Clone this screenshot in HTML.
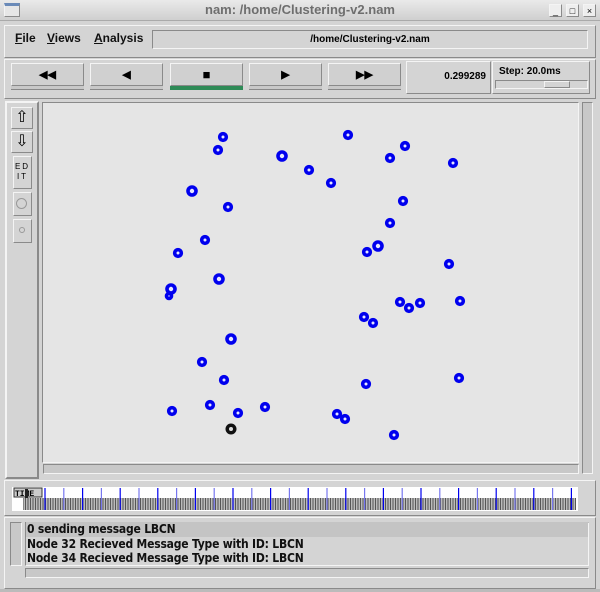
<!DOCTYPE html><html><head><style>
*{margin:0;padding:0;box-sizing:border-box}
body{width:600px;height:592px;background:#d4d4d4;position:relative;overflow:hidden;font-family:"Liberation Sans",sans-serif}
.a{position:absolute}
.rb{border:1px solid;border-color:#f4f4f4 #8a8a8a #8a8a8a #f4f4f4}
.sk{border:1px solid;border-color:#8a8a8a #f4f4f4 #f4f4f4 #8a8a8a}
.btn{background:#d0d0d0;font-size:11px;font-weight:bold;text-align:center;line-height:22px;color:#000}
.ul{height:4px;background:#c8c8c8;border-bottom:1px solid #888}
.msg{font-size:12px;font-weight:bold;color:#111;left:26px;width:562px;height:15px;line-height:15px;padding-left:1px;font-family:"DejaVu Sans Condensed","Liberation Sans",sans-serif;letter-spacing:-0.2px}
.mn{font-size:12px;color:#111;font-weight:bold;top:31px}
</style></head><body>
<div class="a" style="left:0;top:0;width:600px;height:21px;background:linear-gradient(#eaeaea,#cfcfcf);border-bottom:1px solid #aaa"></div>
<div class="a rb" style="left:4px;top:3px;width:16px;height:14px;background:#e6e6e6;border-top:3px solid #6a8ab8"></div>
<div class="a" style="left:0;top:2px;width:600px;text-align:center;font-size:13px;font-weight:bold;color:#6e6e6e">nam: /home/Clustering-v2.nam</div>
<div class="a rb" style="left:549px;top:4px;width:13px;height:13px;font-size:9px;text-align:center;line-height:12px;background:#eee">_</div>
<div class="a rb" style="left:566px;top:4px;width:13px;height:13px;font-size:9px;text-align:center;line-height:12px;background:#eee">□</div>
<div class="a rb" style="left:583px;top:4px;width:13px;height:13px;font-size:9px;text-align:center;line-height:12px;background:#eee">×</div>

<div class="a rb" style="left:4px;top:25px;width:592px;height:33px"></div>
<div class="a mn" style="left:15px"><u>F</u>ile</div>
<div class="a mn" style="left:47px"><u>V</u>iews</div>
<div class="a mn" style="left:94px"><u>A</u>nalysis</div>
<div class="a sk" style="left:152px;top:30px;width:436px;height:19px;font-size:10px;font-weight:bold;text-align:center;line-height:17px">/home/Clustering-v2.nam</div>

<div class="a rb" style="left:4px;top:59px;width:592px;height:40px"></div>
<div class="a rb btn" style="left:11px;top:63px;width:73px;height:23px">◀◀</div><div class="a ul" style="left:11px;top:86px;width:73px"></div>
<div class="a rb btn" style="left:90px;top:63px;width:73px;height:23px">◀</div><div class="a ul" style="left:90px;top:86px;width:73px"></div>
<div class="a rb btn" style="left:170px;top:63px;width:73px;height:23px;font-size:13px">■</div><div class="a" style="left:170px;top:86px;width:73px;height:4px;background:#2e8b57"></div>
<div class="a rb btn" style="left:249px;top:63px;width:73px;height:23px">▶</div><div class="a ul" style="left:249px;top:86px;width:73px"></div>
<div class="a rb btn" style="left:328px;top:63px;width:73px;height:23px">▶▶</div><div class="a ul" style="left:328px;top:86px;width:73px"></div>
<div class="a rb" style="left:406px;top:61px;width:85px;height:33px;font-size:10px;font-weight:bold;text-align:right;padding-right:4px;line-height:30px">0.299289</div>
<div class="a rb" style="left:492px;top:61px;width:98px;height:33px"></div>
<div class="a" style="left:499px;top:66px;font-size:10px;font-weight:bold">Step: 20.0ms</div>
<div class="a sk" style="left:495px;top:80px;width:93px;height:9px"></div>
<div class="a rb" style="left:544px;top:81px;width:26px;height:7px"></div>

<div class="a rb" style="left:5px;top:101px;width:34px;height:378px;border-width:2px"></div>
<div class="a rb" style="left:11px;top:107px;width:22px;height:22px;font-size:16px;text-align:center;line-height:20px">⇧</div>
<div class="a rb" style="left:11px;top:131px;width:22px;height:22px;font-size:16px;text-align:center;line-height:20px">⇩</div>
<div class="a rb" style="left:13px;top:156px;width:19px;height:33px;font-size:8px;text-align:center;line-height:10px;padding-top:5px;letter-spacing:2px">ED<br>IT</div>
<div class="a rb" style="left:13px;top:192px;width:19px;height:24px"></div>
<div class="a" style="left:16px;top:198px;width:11px;height:11px;border:1px solid #999;border-radius:50%"></div>
<div class="a rb" style="left:13px;top:219px;width:19px;height:24px"></div>
<div class="a" style="left:19px;top:227px;width:6px;height:6px;border:1px solid #999;border-radius:50%"></div>

<div class="a sk" style="left:42px;top:102px;width:537px;height:361px;background:#e5e5e5"></div>
<div class="a sk" style="left:582px;top:102px;width:11px;height:372px;background:#c8c8c8"></div>
<div class="a sk" style="left:43px;top:464px;width:536px;height:10px;background:#c8c8c8"></div>

<svg class="a" style="left:0;top:0" width="600" height="592">
<g fill="#e8e8ff" stroke="#0000ee" stroke-width="3.6">
<circle cx="223" cy="137" r="3.3"/><circle cx="218" cy="150" r="3.3"/><circle cx="282" cy="156" r="4"/><circle cx="348" cy="135" r="3.3"/><circle cx="405" cy="146" r="3.3"/><circle cx="390" cy="158" r="3.3"/><circle cx="309" cy="170" r="3.3"/><circle cx="453" cy="163" r="3.3"/><circle cx="331" cy="183" r="3.3"/><circle cx="192" cy="191" r="4"/><circle cx="228" cy="207" r="3.3"/><circle cx="403" cy="201" r="3.3"/><circle cx="390" cy="223" r="3.3"/><circle cx="205" cy="240" r="3.3"/><circle cx="378" cy="246" r="4"/><circle cx="367" cy="252" r="3.3"/><circle cx="178" cy="253" r="3.3"/><circle cx="449" cy="264" r="3.3"/><circle cx="219" cy="279" r="4"/><circle cx="171" cy="289" r="4"/><circle cx="169" cy="296" r="2.5"/><circle cx="400" cy="302" r="3.3"/><circle cx="420" cy="303" r="3.3"/><circle cx="409" cy="308" r="3.3"/><circle cx="460" cy="301" r="3.3"/><circle cx="364" cy="317" r="3.3"/><circle cx="373" cy="323" r="3.3"/><circle cx="231" cy="339" r="4"/><circle cx="202" cy="362" r="3.3"/><circle cx="224" cy="380" r="3.3"/><circle cx="366" cy="384" r="3.3"/><circle cx="459" cy="378" r="3.3"/><circle cx="172" cy="411" r="3.3"/><circle cx="210" cy="405" r="3.3"/><circle cx="238" cy="413" r="3.3"/><circle cx="265" cy="407" r="3.3"/><circle cx="337" cy="414" r="3.3"/><circle cx="345" cy="419" r="3.3"/><circle cx="394" cy="435" r="3.3"/>
</g>
<circle cx="231" cy="429" r="5.5" fill="#111"/><circle cx="231" cy="429" r="2" fill="#ddd"/>
</svg>

<div class="a rb" style="left:4px;top:480px;width:592px;height:36px"></div>
<div class="a" style="left:12px;top:487px;width:566px;height:24px;background:#fff"></div>
<svg class="a" style="left:0;top:0" width="600" height="592">
<defs><pattern id="h" width="2.5" height="12" patternUnits="userSpaceOnUse"><rect width="1" height="12" fill="#555"/><rect x="1" width="1.5" height="12" fill="#bbb"/></pattern></defs>
<rect x="23" y="498" width="553" height="12" fill="url(#h)"/>
<g stroke-width="1.2">
<line x1="45" y1="488" x2="45" y2="510" stroke="#0000ee"/><line x1="63.8" y1="488" x2="63.8" y2="510" stroke="#7777ee"/><line x1="82.6" y1="488" x2="82.6" y2="510" stroke="#0000ee"/><line x1="101.4" y1="488" x2="101.4" y2="510" stroke="#7777ee"/><line x1="120.2" y1="488" x2="120.2" y2="510" stroke="#0000ee"/><line x1="139" y1="488" x2="139" y2="510" stroke="#7777ee"/><line x1="157.8" y1="488" x2="157.8" y2="510" stroke="#0000ee"/><line x1="176.6" y1="488" x2="176.6" y2="510" stroke="#7777ee"/><line x1="195.4" y1="488" x2="195.4" y2="510" stroke="#0000ee"/><line x1="214.2" y1="488" x2="214.2" y2="510" stroke="#7777ee"/><line x1="233" y1="488" x2="233" y2="510" stroke="#0000ee"/><line x1="251.8" y1="488" x2="251.8" y2="510" stroke="#7777ee"/><line x1="270.6" y1="488" x2="270.6" y2="510" stroke="#0000ee"/><line x1="289.4" y1="488" x2="289.4" y2="510" stroke="#7777ee"/><line x1="308.2" y1="488" x2="308.2" y2="510" stroke="#0000ee"/><line x1="327" y1="488" x2="327" y2="510" stroke="#7777ee"/><line x1="345.8" y1="488" x2="345.8" y2="510" stroke="#0000ee"/><line x1="364.6" y1="488" x2="364.6" y2="510" stroke="#7777ee"/><line x1="383.4" y1="488" x2="383.4" y2="510" stroke="#0000ee"/><line x1="402.2" y1="488" x2="402.2" y2="510" stroke="#7777ee"/><line x1="421" y1="488" x2="421" y2="510" stroke="#0000ee"/><line x1="439.8" y1="488" x2="439.8" y2="510" stroke="#7777ee"/><line x1="458.6" y1="488" x2="458.6" y2="510" stroke="#0000ee"/><line x1="477.4" y1="488" x2="477.4" y2="510" stroke="#7777ee"/><line x1="496.2" y1="488" x2="496.2" y2="510" stroke="#0000ee"/><line x1="515" y1="488" x2="515" y2="510" stroke="#7777ee"/><line x1="533.8" y1="488" x2="533.8" y2="510" stroke="#0000ee"/><line x1="552.6" y1="488" x2="552.6" y2="510" stroke="#7777ee"/><line x1="571.4" y1="488" x2="571.4" y2="510" stroke="#0000ee"/>
</g>
<rect x="14" y="488" width="28" height="9" fill="#ccc" stroke="#333"/>
<text x="15" y="496" font-size="8" font-family="Liberation Mono" font-weight="bold">TIME</text>
<rect x="25" y="489" width="3" height="9" fill="#222"/>
</svg>

<div class="a rb" style="left:4px;top:517px;width:592px;height:72px"></div>
<div class="a sk" style="left:10px;top:522px;width:12px;height:44px;background:#c8c8c8"></div>
<div class="a sk" style="left:25px;top:522px;width:564px;height:44px;background:#d4d4d4"></div>
<div class="a msg" style="top:522px;background:#c4c4c4">0 sending message LBCN</div>
<div class="a msg" style="top:537px">Node 32 Recieved Message Type with ID: LBCN</div>
<div class="a msg" style="top:551px">Node 34 Recieved Message Type with ID: LBCN</div>
<div class="a sk" style="left:25px;top:568px;width:564px;height:10px;background:#c8c8c8"></div>
<div class="a" style="left:0;top:589px;width:600px;height:3px;background:#bbb"></div>
</body></html>
